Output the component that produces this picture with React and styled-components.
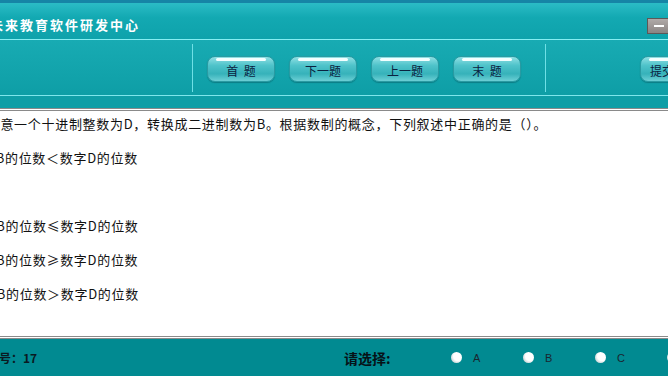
import React from "react";
import styled, { createGlobalStyle } from "styled-components";

const GlobalStyle = createGlobalStyle`
  html, body {
    margin: 0;
    padding: 0;
    overflow: hidden;
    background: #ffffff;
  }
`;

const cjk = `"Noto Sans CJK SC", "Liberation Sans", sans-serif`;

const Window = styled.div`
  width: 760px;
  height: 376px;
  margin-left: -40px;
  display: flex;
  flex-direction: column;
  font-family: ${cjk};
`;

const TitleBar = styled.div`
  height: 40px;
  box-sizing: border-box;
  border-top: 3px solid #1685a6;
  border-bottom: 1px solid #86eef2;
  background: linear-gradient(#2bbcc6, #13a9b2 40%, #0ea2ab);
  display: flex;
  align-items: center;
  justify-content: space-between;
  padding: 7px 49px 0 30px;
`;

const TitleText = styled.div`
  color: #ffffff;
  font-size: 13px;
  font-weight: 700;
  letter-spacing: 2px;
`;

const MinButton = styled.div`
  width: 24px;
  height: 16px;
  margin-top: 2px;
  background: linear-gradient(#b0aaa8, #8a8483);
  border: 1px solid #5d5857;
  box-sizing: border-box;
  display: flex;
  align-items: center;
  justify-content: center;

  &::after {
    content: "";
    width: 10px;
    height: 2px;
    background: #ffffff;
  }
`;

const Toolbar = styled.div`
  height: 55px;
  border-bottom: 1px solid #7fe6ec;
  background: linear-gradient(#18abb3, #0e9ea6);
  display: flex;
  align-items: center;
`;

const ToolbarSpacer = styled.div`
  flex: none;
  width: ${(p) => p.$width}px;
`;

const Separator = styled.div`
  flex: none;
  width: 1px;
  height: 48px;
  background: #6fe0e6;
`;

const ButtonGroup = styled.div`
  display: flex;
  gap: 14px;
  padding: 0 24px 0 14px;
`;

const NavButton = styled.div`
  position: relative;
  flex: none;
  width: 68px;
  height: 26px;
  margin-top: 2px;
  box-sizing: border-box;
  border-radius: 8px;
  border: 1px solid #2a9aa2;
  background: linear-gradient(#8fe0e4, #4fc3ca 35%, #36b2ba 70%, #6ccfd5);
  box-shadow: 0 1px 1px rgba(0, 60, 70, 0.35);
  color: #0a2240;
  font-size: 12px;
  display: flex;
  align-items: center;
  justify-content: center;
  padding-top: 3px;
  white-space: pre;

  &::before {
    content: "";
    position: absolute;
    top: 1px;
    left: 8px;
    right: 8px;
    height: 3px;
    border-radius: 2px;
    background: #f2ffff;
  }
`;

const SubmitButton = styled(NavButton)`
  margin-left: 94px;
`;

const Strip = styled.div`
  height: 12px;
  background: #0f9ea6;
`;

const Content = styled.div`
  height: 231px;
  flex: none;
  box-sizing: border-box;
  border-top: 3px double #8a8a8a;
  border-bottom: 3px double #8a8a8a;
  background: #ffffff;
  padding: 3px 0 0 13px;
  color: #111111;
  font-size: 13px;
  letter-spacing: 0.7px;
`;

const Line = styled.div`
  height: 34px;
  line-height: 20px;
  white-space: nowrap;
  margin-left: ${(p) => p.$indent || 0}px;
`;

const BottomBar = styled.div`
  flex: 1;
  background: #018a91;
  display: flex;
  align-items: center;
  padding-left: 27px;
`;

const QuestionNo = styled.div`
  width: 357px;
  flex: none;
  color: #0a1a22;
  font-size: 12px;
  font-weight: 700;
`;

const ChooseLabel = styled.div`
  width: 107px;
  flex: none;
  color: #061218;
  font-size: 14px;
  font-weight: 700;
`;

const RadioItem = styled.label`
  width: 72px;
  flex: none;
  display: flex;
  align-items: center;
  gap: 11px;
  color: #1a2630;
  font-family: "Liberation Sans", sans-serif;
  font-size: 11px;
`;

const RadioDot = styled.span`
  width: 11px;
  height: 11px;
  border-radius: 50%;
  background: radial-gradient(circle at 62% 40%, #ffffff 45%, #c9d6d8 75%, #8fa4a7);
`;

const options = [
  "A．数字B的位数＜数字D的位数",
  "",
  "B．数字B的位数≤数字D的位数",
  "C．数字B的位数≥数字D的位数",
  "D．数字B的位数＞数字D的位数",
];

export default function App() {
  return (
    <>
      <GlobalStyle />
      <Window>
        <TitleBar>
          <TitleText>未来教育软件研发中心</TitleText>
          <MinButton />
        </TitleBar>
        <Toolbar>
          <ToolbarSpacer $width={232} />
          <Separator />
          <ButtonGroup>
            <NavButton>{"首  题"}</NavButton>
            <NavButton>下一题</NavButton>
            <NavButton>上一题</NavButton>
            <NavButton>{"末  题"}</NavButton>
          </ButtonGroup>
          <Separator />
          <SubmitButton>提交试卷</SubmitButton>
        </Toolbar>
        <Strip />
        <Content>
          <Line>设任意一个十进制整数为D，转换成二进制数为B。根据数制的概念，下列叙述中正确的是（）。</Line>
          {options.map((text, i) => (
            <Line key={i} $indent={-27}>
              {text}
            </Line>
          ))}
        </Content>
        <BottomBar>
          <QuestionNo>题号：17</QuestionNo>
          <ChooseLabel>请选择:</ChooseLabel>
          {["A", "B", "C", "D"].map((l) => (
            <RadioItem key={l}>
              <RadioDot />
              {l}
            </RadioItem>
          ))}
        </BottomBar>
      </Window>
    </>
  );
}
